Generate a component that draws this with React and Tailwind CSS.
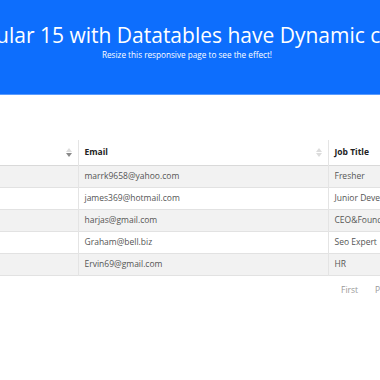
import React from "react";

const rows = [
  { name: "Mark", email: "marrk9658@yahoo.com", job: "Fresher" },
  { name: "James", email: "james369@hotmail.com", job: "Junior Developer" },
  { name: "Harjas", email: "harjas@gmail.com", job: "CEO&Founder" },
  { name: "Graham", email: "Graham@bell.biz", job: "Seo Expert" },
  { name: "Ervin", email: "Ervin69@gmail.com", job: "HR" },
];

const SortIcon = ({ active }) => (
  <span className="flex flex-col items-center gap-[1px]">
    <span className="block w-0 h-0 border-l-[3px] border-r-[3px] border-b-[4px] border-l-transparent border-r-transparent border-b-[#dcdcdc]" />
    <span
      className={
        "block w-0 h-0 border-l-[3px] border-r-[3px] border-t-[4px] border-l-transparent border-r-transparent " +
        (active ? "border-t-[#8a8a8a]" : "border-t-[#dcdcdc]")
      }
    />
  </span>
);

export default function App() {
  return (
    <div className="w-[380px] h-[380px] overflow-hidden bg-white font-['Open_Sans',sans-serif]">
      {/* Banner */}
      <div className="h-[95px] bg-[#0d6efd] border-b border-[#5a9bfd] flex flex-col items-center pt-[21px]">
        <div className="flex justify-center w-full pl-[32px]">
          <h1 className="whitespace-nowrap text-white text-[21px] leading-[28px] font-medium">
            Angular 15 with Datatables have Dynamic columns
          </h1>
        </div>
        <p className="mt-0 mr-[6px] text-white text-[8.2px] leading-[12px]">
          Resize this responsive page to see the effect!
        </p>
      </div>

      {/* Table */}
      <div className="flex justify-center mt-[45px]">
        <div className="shrink-0">
          <table className="w-[724px] table-fixed border-collapse text-[8.5px] text-[#555]">
            <colgroup>
              <col className="w-[250px]" />
              <col className="w-[250px]" />
              <col className="w-[224px]" />
            </colgroup>
            <thead>
              <tr className="h-[25px] border-b border-[#d9d9d9]">
                <th className="text-left font-bold text-[#222] px-[6px] border-r border-[#e4e4e4]">
                  <div className="flex items-center justify-between">
                    <span>Name</span>
                    <SortIcon active />
                  </div>
                </th>
                <th className="text-left font-bold text-[#222] px-[6px] border-r border-[#e4e4e4]">
                  <div className="flex items-center justify-between">
                    <span>Email</span>
                    <SortIcon />
                  </div>
                </th>
                <th className="text-left font-bold text-[#222] px-[6px]">
                  <div className="flex items-center justify-between">
                    <span>Job Title</span>
                    <SortIcon />
                  </div>
                </th>
              </tr>
            </thead>
            <tbody>
              {rows.map((r, i) => (
                <tr
                  key={r.email}
                  className={
                    "h-[22px] border-b border-[#e2e2e2] " +
                    (i % 2 === 0 ? "bg-[#f2f2f2]" : "bg-white")
                  }
                >
                  <td className="px-[6px] border-r border-[#e4e4e4]">{r.name}</td>
                  <td className="px-[6px] border-r border-[#e4e4e4]">{r.email}</td>
                  <td className="px-[6px] whitespace-nowrap">{r.job}</td>
                </tr>
              ))}
            </tbody>
          </table>
          <div className="flex gap-[17px] mt-[8px] pl-[513px] text-[8.5px] text-[#999]">
            <span>First</span>
            <span>Previous</span>
            <span>1</span>
            <span>Next</span>
            <span>Last</span>
          </div>
        </div>
      </div>
    </div>
  );
}
